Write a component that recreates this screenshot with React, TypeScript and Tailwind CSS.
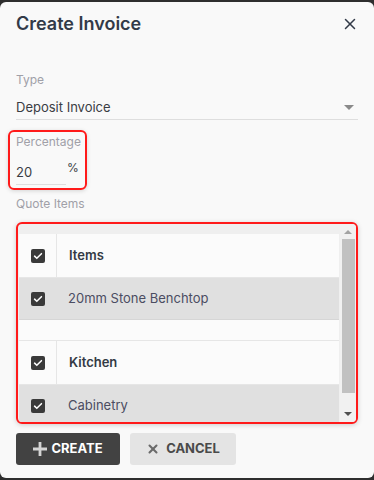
import { X } from 'lucide-react';

function Check() {
  return (
    <span className="flex size-[14px] items-center justify-center rounded-[2px] bg-[#3a3a3a]">
      <svg viewBox="0 0 14 14" className="size-[12px]" fill="none">
        <path d="M3 7.2l2.6 2.5L11 4.3" stroke="#fff" strokeWidth="1.8" strokeLinecap="round" strokeLinejoin="round" />
      </svg>
    </span>
  );
}

function GroupHeader({ name }: { name: string }) {
  return (
    <div className="flex h-[44px] bg-[#fbfbfb] border-b border-[#e6e6e6]">
      <div className="flex w-[38px] items-center justify-center border-r border-[#e6e6e6]">
        <Check />
      </div>
      <div className="flex items-center pl-[12px] text-[13px] font-semibold text-[#333a44]">{name}</div>
    </div>
  );
}

function ItemRow({ name }: { name: string }) {
  return (
    <div className="flex h-[42px] bg-[#e0e0e0] border-b border-[#d6d6d6]">
      <div className="flex w-[38px] items-center justify-center">
        <Check />
      </div>
      <div className="flex items-center pl-[11px] text-[13px] text-[#4b4d62]">{name}</div>
    </div>
  );
}

export default function App() {
  return (
    <div className="h-[480px] w-[374px] overflow-hidden bg-[#2e2e2e] pt-[2px] font-['Inter',sans-serif]">
      <div className="flex h-[476px] flex-col rounded-[6px] bg-[#f9f9f9] px-4">
        {/* Header */}
        <div className="flex items-center justify-between pt-[10px]">
          <h2 className="text-[18px] font-semibold leading-[24px] text-[#323a48]">Create Invoice</h2>
          <X className="mr-[-1px] size-[18px] text-[#323a48]" strokeWidth={2} />
        </div>

        {/* Type */}
        <div className="mt-[36px]">
          <p className="text-[12px] leading-[16px] text-[#a0a0a8]">Type</p>
          <div className="mt-[10px] flex items-center justify-between border-b border-[#dedede] pb-[3px]">
            <span className="text-[13px] leading-[18px] text-[#3a3d44]">Deposit Invoice</span>
            <svg viewBox="0 0 10 5" className="mr-[4px] h-[5px] w-[10px]">
              <path d="M0 0h10L5 5z" fill="#8a8a8a" />
            </svg>
          </div>
        </div>

        {/* Percentage */}
        <div className="ml-[-8px] mt-[10px] w-[79px] rounded-[6px] border-2 border-[#ff1a1a] px-[6px] pt-[2px] pb-[3px] shadow-[0_1px_4px_rgba(0,0,0,0.15)]">
          <p className="text-[12px] leading-[16px] text-[#a0a0a8]">Percentage</p>
          <div className="mt-[14px] flex items-start">
            <span className="w-[50px] border-b border-[#dedede] pb-[4px] text-[13px] leading-[16px] text-[#3a3d44]">20</span>
            <span className="ml-[1px] mt-[-4px] text-[12px] leading-[16px] text-[#3a3d44]">%</span>
          </div>
        </div>

        <p className="mt-[6px] text-[12px] leading-[16px] text-[#a0a0a8]">Quote Items</p>

        {/* Quote items table */}
        <div className="mt-[10px] flex h-[202px] overflow-hidden rounded-[6px] border-2 border-[#ff1a1a] bg-[#efefef] shadow-[0_1px_5px_rgba(0,0,0,0.18)]">
          <div className="flex-1 overflow-hidden pt-[10px] pl-px pr-[1px]">
            <GroupHeader name="Items" />
            <ItemRow name="20mm Stone Benchtop" />
            <div className="h-[21px] bg-[#fbfbfb] border-b border-[#e6e6e6]" />
            <GroupHeader name="Kitchen" />
            <ItemRow name="Cabinetry" />
          </div>
          <div className="flex w-[16px] flex-col items-center bg-[#f1f1f1]">
            <svg viewBox="0 0 8 4" className="mt-[6px] h-[4px] w-[8px]">
              <path d="M0 4h8L4 0z" fill="#a3a3a3" />
            </svg>
            <div className="mt-[5px] h-[154px] w-[13px] bg-[#c1c1c1]" />
            <div className="flex-1" />
            <svg viewBox="0 0 8 4" className="mb-[6px] h-[4px] w-[8px]">
              <path d="M0 0h8L4 4z" fill="#505050" />
            </svg>
          </div>
        </div>

        {/* Actions */}
        <div className="mt-[9px] flex gap-[10px]">
          <button className="flex h-[32px] w-[104px] items-center justify-center gap-[4px] rounded-[3px] bg-[#424242] text-[13px] font-bold text-white">
            <svg viewBox="0 0 14 14" className="size-[14px]">
              <path d="M5.6 0h2.8v5.6H14v2.8H8.4V14H5.6V8.4H0V5.6h5.6z" fill="#d4d4d4" />
            </svg>
            CREATE
          </button>
          <button className="flex h-[32px] w-[106px] items-center justify-center gap-[6px] rounded-[3px] bg-[#e4e4e4] text-[13px] font-bold text-[#4a4a4a]">
            <X className="size-[14px] text-[#6a6a6a]" strokeWidth={3.5} />
            CANCEL
          </button>
        </div>
      </div>
    </div>
  );
}
